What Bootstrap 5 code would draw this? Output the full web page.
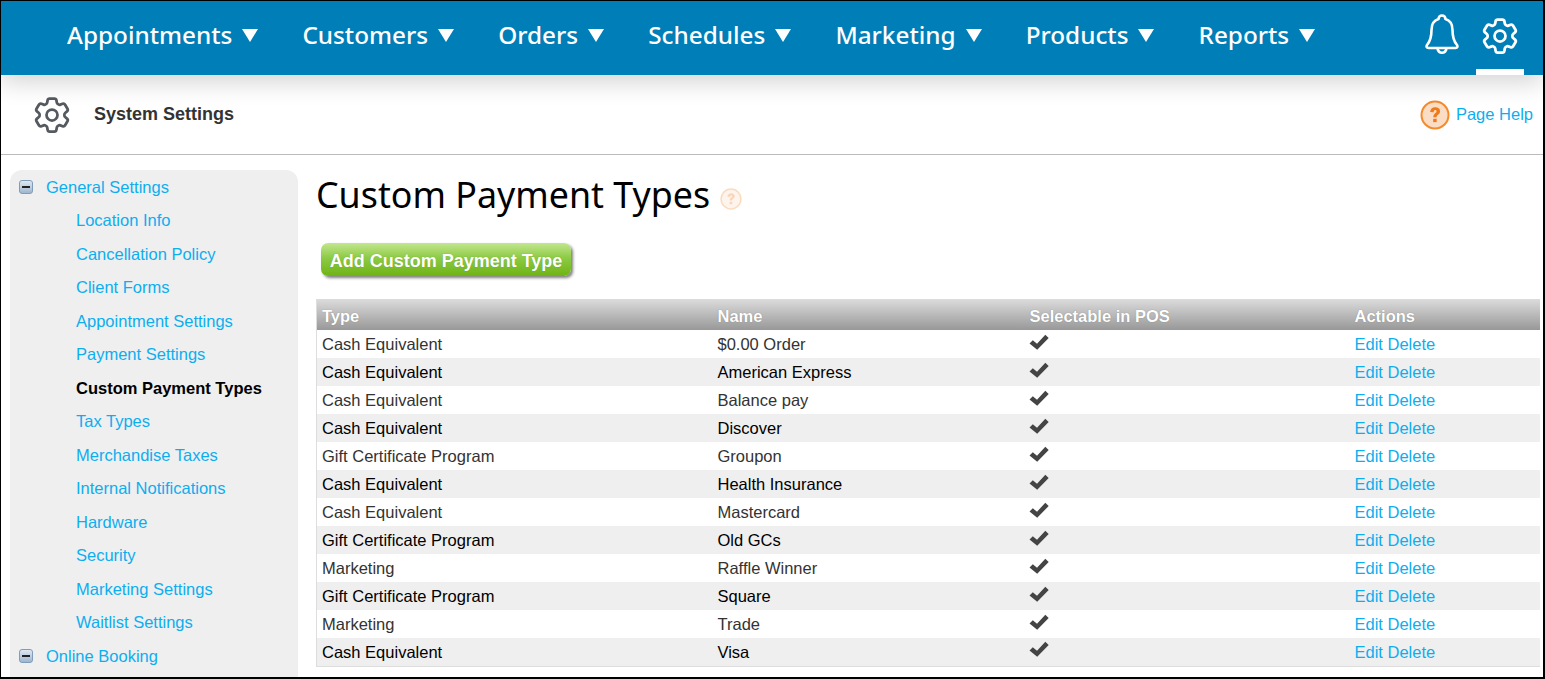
<!DOCTYPE html>
<html lang="en">
<head>
<meta charset="utf-8">
<title>Custom Payment Types</title>
<link href="https://cdn.jsdelivr.net/npm/bootstrap@5.3.0/dist/css/bootstrap.min.css" rel="stylesheet">
<style>
html,body{height:100%;overflow:hidden}
body{font-family:"Liberation Sans",Arial,sans-serif;font-size:16.5px;color:#333;background:#fff}
a{color:#0caeef;text-decoration:none}
.frame{height:679px;border:1px solid #000;border-width:1px 2px 2px 1px;overflow:hidden;display:flex;flex-direction:column}
.topbar{height:74px;background:#007eb8;flex:none;padding-left:66px;box-shadow:0 8px 22px rgba(0,0,0,.16);position:relative;z-index:2}
.topitem{font-family:"Noto Sans",sans-serif;font-size:24.3px;color:#fff;line-height:1;font-weight:500;display:flex;align-items:center;gap:10px;margin-right:44.100px;height:68px}
.topitem svg{display:block}
.topicons{margin-left:auto;padding-right:19px;height:74px}
.iconcell{width:48px;height:74px;display:flex;justify-content:center;padding-top:13px;margin-left:10px}
.iconcell.bellcell{padding-top:12px}
.iconcell.sel{border-bottom:6px solid #fff}
.subhead{height:80px;flex:none;border-bottom:1px solid #bbb;padding:0 10px 0 29px}
.subcog{color:#555a60}
.subtitle{font-weight:700;font-size:18px;color:#333;margin-left:20px}
.helplink{font-size:16.5px;margin-left:6px}
.mainwrap{flex:1;min-height:0;padding:15px 5px 0 9px;gap:18px}
.sidepanel{width:288px;flex:none;background:#efefef;border-radius:12px 12px 0 0;padding:.5px 0 0 9px;height:520px}
.sidegroup{height:33.5px;display:flex;align-items:center;gap:13px}
.sidesub{height:33.5px;display:flex;align-items:center;padding-left:57px}
.sidesub a,.sidegroup a{white-space:nowrap}
.sidesub .curr{color:#000;font-weight:700}
.minusbox{width:14px;height:14px;border-radius:3px;border:1px solid #7f9db9;background:linear-gradient(#dfe8f2,#9fb6cf);display:flex;align-items:center;justify-content:center;flex:none}
.minusbox span{display:block;width:8px;height:2px;background:#222}
.contentcol{flex:1;min-width:0}
.pagetitle{font-family:"Noto Sans",sans-serif;font-size:35.8px;font-weight:400;color:#000;margin:0;line-height:48px;height:48px;display:flex;align-items:center;gap:10px}
.pagetitle svg{margin-top:9px}
.addbtn{margin:25px 0 0 5px;background:linear-gradient(#c3e68f,#8ccb45 45%,#6fb314);border:0;border-radius:7px;height:33px;width:250px;color:#fff;font-weight:700;font-size:18px;padding:3px 0 0;box-shadow:2px 2px 3px rgba(0,0,0,.5);text-shadow:0 0 1px rgba(60,90,0,.4);white-space:nowrap}
.paytable{width:1224px;margin:23px 0 0;table-layout:fixed;border-collapse:collapse;border-left:1px solid #ddd;border-bottom:1px solid #ddd;font-size:16.5px}
.paytable th{height:31px;padding:3px 0 0 5px;color:#fff;font-weight:700;background:linear-gradient(#dcdcdc,#989898);border:0;vertical-align:middle;text-shadow:0 0 1px rgba(0,0,0,.35)}
.paytable td{height:28px;padding:0 0 0 5px;border:0;vertical-align:middle;color:#333;background:#fff;line-height:1;box-shadow:none}
.paytable tbody tr:nth-child(even) td{background:#efefef;color:#000}
.cola{width:396px}.colb{width:312px}.colc{width:325px}
.checkmark{display:block;margin:-5px 0 0 -1px}
</style>
</head>
<body>
<svg class="d-none" aria-hidden="true"><defs>
<symbol id="cog" viewBox="0 0 24 24"><path fill="none" stroke="currentColor" stroke-width="1.5" stroke-linejoin="round" d="M9.594 3.94c.09-.542.56-.94 1.11-.94h2.593c.55 0 1.02.398 1.11.94l.213 1.281c.063.374.313.686.645.87.074.04.147.083.22.127.325.196.72.257 1.075.124l1.217-.456a1.125 1.125 0 0 1 1.37.49l1.296 2.247a1.125 1.125 0 0 1-.26 1.431l-1.003.827c-.293.241-.438.613-.43.992a7.723 7.723 0 0 1 0 .255c-.008.378.137.75.43.991l1.004.827c.424.35.534.955.26 1.43l-1.298 2.247a1.125 1.125 0 0 1-1.369.491l-1.217-.456c-.355-.133-.75-.072-1.076.124a6.47 6.47 0 0 1-.22.128c-.331.183-.581.495-.644.869l-.213 1.281c-.09.543-.56.94-1.11.94h-2.594c-.55 0-1.019-.398-1.11-.94l-.213-1.281c-.062-.374-.312-.686-.644-.87a6.52 6.52 0 0 1-.22-.127c-.325-.196-.72-.257-1.076-.124l-1.217.456a1.125 1.125 0 0 1-1.369-.49l-1.297-2.247a1.125 1.125 0 0 1 .26-1.431l1.004-.827c.292-.24.437-.613.43-.991a6.932 6.932 0 0 1 0-.255c.007-.38-.138-.751-.43-.992l-1.004-.827a1.125 1.125 0 0 1-.26-1.43l1.297-2.247a1.125 1.125 0 0 1 1.37-.491l1.216.456c.356.133.751.072 1.076-.124.072-.044.146-.086.22-.128.332-.183.582-.495.644-.869l.214-1.28Z"/><path fill="none" stroke="currentColor" stroke-width="1.5" d="M15 12a3 3 0 1 1-6 0 3 3 0 0 1 6 0Z"/></symbol>
<symbol id="tri" viewBox="0 0 16 13"><path d="M0 0h16L8 13z" fill="#fff"/></symbol>
<symbol id="chk" viewBox="0 0 20 16"><path d="M.5 9.500l3.300-3.300L8 9.700 16.300.8l3.400 3.200L8.200 15.800z" fill="#444"/></symbol>
<symbol id="qmark" viewBox="0 0 30 30"><circle cx="15" cy="15" r="13.500" fill="#fbdcc4" stroke="#f58a2c" stroke-width="2"/><path d="M10.200 12c0-3 2.100-4.700 5-4.700s4.900 1.500 4.900 3.900c0 3.300-3.500 3.300-3.500 6h-3.300c0-4 3.200-4 3.200-5.800 0-.8-.5-1.300-1.300-1.300-.9 0-1.500.7-1.500 2.100z" fill="#ee7a1a"/><rect x="13.200" y="18.800" width="3.500" height="3.300" fill="#ee7a1a"/></symbol>
</defs></svg>
<div class="frame">
  <nav class="topbar d-flex align-items-start">
    <div class="d-flex">
      <div class="topitem">Appointments<svg width="16" height="13"><use href="#tri"/></svg></div>
      <div class="topitem">Customers<svg width="16" height="13"><use href="#tri"/></svg></div>
      <div class="topitem">Orders<svg width="16" height="13"><use href="#tri"/></svg></div>
      <div class="topitem">Schedules<svg width="16" height="13"><use href="#tri"/></svg></div>
      <div class="topitem">Marketing<svg width="16" height="13"><use href="#tri"/></svg></div>
      <div class="topitem">Products<svg width="16" height="13"><use href="#tri"/></svg></div>
      <div class="topitem">Reports<svg width="16" height="13"><use href="#tri"/></svg></div>
    </div>
    <div class="topicons d-flex">
      <div class="iconcell bellcell"><svg width="36" height="42" viewBox="0 0 36 42" fill="none" stroke="#fff" stroke-width="2.600" stroke-linejoin="round"><path d="M18 2.500c-2 0-3.400 1.500-3.400 3.600C9.500 7.600 7.500 12 7.500 17c0 6-1 11-4.500 15-1 1.400-.5 3 1.500 3h27c2 0 2.500-1.600 1.500-3-3.500-4-4.500-9-4.500-15 0-5-2-9.400-7.100-10.900C21.400 4 20 2.500 18 2.500z"/><path d="M13.500 35.500c.5 2.700 2.300 4.200 4.500 4.200s4-1.500 4.500-4.200"/></svg></div>
      <div class="iconcell sel text-white"><svg width="44" height="44"><use href="#cog"/></svg></div>
    </div>
  </nav>

  <header class="subhead d-flex align-items-center">
    <svg class="subcog" width="44" height="44"><use href="#cog"/></svg>
    <span class="subtitle">System Settings</span>
    <div class="ms-auto d-flex align-items-center">
      <svg width="30" height="30"><use href="#qmark"/></svg>
      <a class="helplink" href="#">Page Help</a>
    </div>
  </header>

  <div class="mainwrap d-flex">
    <aside class="sidepanel">
      <div class="sidegroup"><span class="minusbox"><span></span></span><a href="#">General Settings</a></div>
      <div class="sidesub"><a href="#">Location Info</a></div>
      <div class="sidesub"><a href="#">Cancellation Policy</a></div>
      <div class="sidesub"><a href="#">Client Forms</a></div>
      <div class="sidesub"><a href="#">Appointment Settings</a></div>
      <div class="sidesub"><a href="#">Payment Settings</a></div>
      <div class="sidesub"><a class="curr" href="#">Custom Payment Types</a></div>
      <div class="sidesub"><a href="#">Tax Types</a></div>
      <div class="sidesub"><a href="#">Merchandise Taxes</a></div>
      <div class="sidesub"><a href="#">Internal Notifications</a></div>
      <div class="sidesub"><a href="#">Hardware</a></div>
      <div class="sidesub"><a href="#">Security</a></div>
      <div class="sidesub"><a href="#">Marketing Settings</a></div>
      <div class="sidesub"><a href="#">Waitlist Settings</a></div>
      <div class="sidegroup"><span class="minusbox"><span></span></span><a href="#">Online Booking</a></div>
    </aside>
    <main class="contentcol">
      <h1 class="pagetitle">Custom Payment Types <svg width="22" height="22" opacity=".3"><use href="#qmark"/></svg></h1>
      <button class="btn addbtn" type="button">Add Custom Payment Type</button>
      <table class="table paytable">
        <colgroup><col class="cola"><col class="colb"><col class="colc"><col></colgroup>
        <thead><tr><th>Type</th><th>Name</th><th>Selectable in POS</th><th>Actions</th></tr></thead>
        <tbody>
          <tr><td>Cash Equivalent</td><td>$0.00 Order</td><td><svg class="checkmark" width="20" height="16"><use href="#chk"/></svg></td><td><a href="#">Edit</a> <a href="#">Delete</a></td></tr>
          <tr><td>Cash Equivalent</td><td>American Express</td><td><svg class="checkmark" width="20" height="16"><use href="#chk"/></svg></td><td><a href="#">Edit</a> <a href="#">Delete</a></td></tr>
          <tr><td>Cash Equivalent</td><td>Balance pay</td><td><svg class="checkmark" width="20" height="16"><use href="#chk"/></svg></td><td><a href="#">Edit</a> <a href="#">Delete</a></td></tr>
          <tr><td>Cash Equivalent</td><td>Discover</td><td><svg class="checkmark" width="20" height="16"><use href="#chk"/></svg></td><td><a href="#">Edit</a> <a href="#">Delete</a></td></tr>
          <tr><td>Gift Certificate Program</td><td>Groupon</td><td><svg class="checkmark" width="20" height="16"><use href="#chk"/></svg></td><td><a href="#">Edit</a> <a href="#">Delete</a></td></tr>
          <tr><td>Cash Equivalent</td><td>Health Insurance</td><td><svg class="checkmark" width="20" height="16"><use href="#chk"/></svg></td><td><a href="#">Edit</a> <a href="#">Delete</a></td></tr>
          <tr><td>Cash Equivalent</td><td>Mastercard</td><td><svg class="checkmark" width="20" height="16"><use href="#chk"/></svg></td><td><a href="#">Edit</a> <a href="#">Delete</a></td></tr>
          <tr><td>Gift Certificate Program</td><td>Old GCs</td><td><svg class="checkmark" width="20" height="16"><use href="#chk"/></svg></td><td><a href="#">Edit</a> <a href="#">Delete</a></td></tr>
          <tr><td>Marketing</td><td>Raffle Winner</td><td><svg class="checkmark" width="20" height="16"><use href="#chk"/></svg></td><td><a href="#">Edit</a> <a href="#">Delete</a></td></tr>
          <tr><td>Gift Certificate Program</td><td>Square</td><td><svg class="checkmark" width="20" height="16"><use href="#chk"/></svg></td><td><a href="#">Edit</a> <a href="#">Delete</a></td></tr>
          <tr><td>Marketing</td><td>Trade</td><td><svg class="checkmark" width="20" height="16"><use href="#chk"/></svg></td><td><a href="#">Edit</a> <a href="#">Delete</a></td></tr>
          <tr><td>Cash Equivalent</td><td>Visa</td><td><svg class="checkmark" width="20" height="16"><use href="#chk"/></svg></td><td><a href="#">Edit</a> <a href="#">Delete</a></td></tr>
        </tbody>
      </table>
    </main>
  </div>
</div>
<script src="https://cdn.jsdelivr.net/npm/bootstrap@5.3.0/dist/js/bootstrap.bundle.min.js"></script>
</body>
</html>
